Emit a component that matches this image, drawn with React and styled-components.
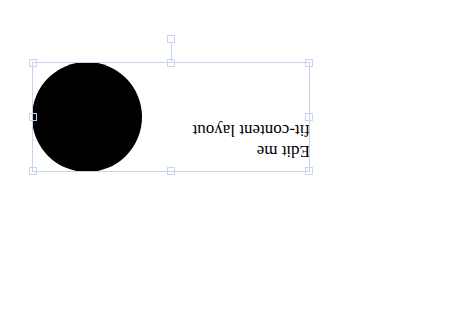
import styled, { createGlobalStyle } from "styled-components";

const GlobalStyle = createGlobalStyle`
  html, body {
    margin: 0;
    padding: 0;
    background: #fff;
  }
`;

const HANDLE_COLOR = "#c7d5f3";

function App() {
  return (
    <>
      <GlobalStyle />
      <Canvas>
        <Node>
          <Rotated>
            <TextBlock>
              <div>Edit me</div>
              <div>fit-content layout</div>
            </TextBlock>
            <Circle />
          </Rotated>
          <Selection>
            <RotateLine />
            <Handle $x="50%" $y="-24px" />
            <Handle $x="0" $y="0" />
            <Handle $x="50%" $y="0" />
            <Handle $x="100%" $y="0" />
            <Handle $x="0" $y="50%" />
            <Handle $x="100%" $y="50%" />
            <Handle $x="0" $y="100%" />
            <Handle $x="50%" $y="100%" />
            <Handle $x="100%" $y="100%" />
          </Selection>
        </Node>
      </Canvas>
    </>
  );
}

const Canvas = styled.div`
  position: relative;
  width: 474px;
  height: 325px;
  overflow: hidden;
  background: #fff;
`;

const Node = styled.div`
  position: absolute;
  left: 32px;
  top: 62px;
  width: 278px;
  height: 110px;
`;

const Rotated = styled.div`
  display: flex;
  justify-content: space-between;
  width: 100%;
  height: 100%;
  transform: rotate(180deg);
`;

const TextBlock = styled.div`
  padding-top: 10px;
  font-family: "Liberation Serif", "Times New Roman", serif;
  font-size: 17px;
  line-height: 21px;
  color: #000;
`;

const Circle = styled.div`
  width: 110px;
  height: 110px;
  border-radius: 50%;
  background: #000;
  flex-shrink: 0;
`;

const Selection = styled.div`
  position: absolute;
  inset: 0;
  border: 1px solid ${HANDLE_COLOR};
  box-sizing: border-box;
  pointer-events: none;
`;

const RotateLine = styled.div`
  position: absolute;
  left: 50%;
  top: -20px;
  width: 1px;
  height: 20px;
  background: ${HANDLE_COLOR};
`;

const Handle = styled.div`
  position: absolute;
  left: ${(p) => p.$x};
  top: ${(p) => p.$y};
  width: 8px;
  height: 8px;
  margin: -4px 0 0 -4px;
  border: 1px solid ${HANDLE_COLOR};
  box-sizing: border-box;
  background: transparent;
`;

export default App;
